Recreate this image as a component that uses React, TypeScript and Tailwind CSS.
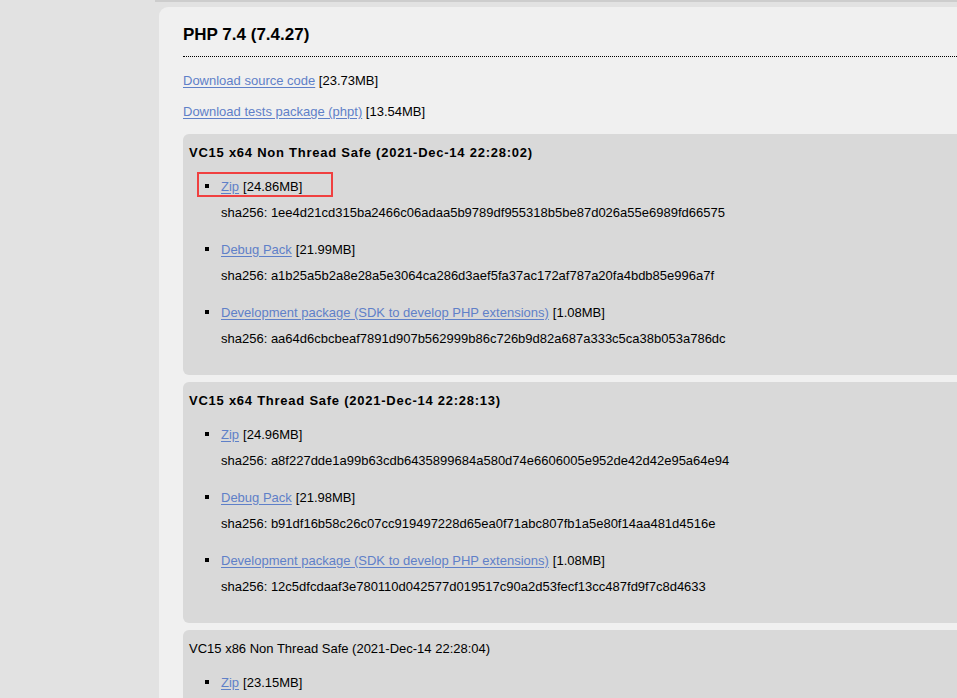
import React from 'react'

type Item = { label: string; size: string; sha: string; mark?: boolean }
type Build = { title: string; bold: boolean; items: Item[] }

const builds: Build[] = [
  {
    title: 'VC15 x64 Non Thread Safe (2021-Dec-14 22:28:02)',
    bold: true,
    items: [
      { label: 'Zip', size: '[24.86MB]', sha: '1ee4d21cd315ba2466c06adaa5b9789df955318b5be87d026a55e6989fd66575', mark: true },
      { label: 'Debug Pack', size: '[21.99MB]', sha: 'a1b25a5b2a8e28a5e3064ca286d3aef5fa37ac172af787a20fa4bdb85e996a7f' },
      { label: 'Development package (SDK to develop PHP extensions)', size: '[1.08MB]', sha: 'aa64d6cbcbeaf7891d907b562999b86c726b9d82a687a333c5ca38b053a786dc' },
    ],
  },
  {
    title: 'VC15 x64 Thread Safe (2021-Dec-14 22:28:13)',
    bold: true,
    items: [
      { label: 'Zip', size: '[24.96MB]', sha: 'a8f227dde1a99b63cdb6435899684a580d74e6606005e952de42d42e95a64e94' },
      { label: 'Debug Pack', size: '[21.98MB]', sha: 'b91df16b58c26c07cc919497228d65ea0f71abc807fb1a5e80f14aa481d4516e' },
      { label: 'Development package (SDK to develop PHP extensions)', size: '[1.08MB]', sha: '12c5dfcdaaf3e780110d042577d019517c90a2d53fecf13cc487fd9f7c8d4633' },
    ],
  },
  {
    title: 'VC15 x86 Non Thread Safe (2021-Dec-14 22:28:04)',
    bold: false,
    items: [
      { label: 'Zip', size: '[23.15MB]', sha: '' },
    ],
  },
]

function Link({ children }: { children: React.ReactNode }) {
  return <a href="#" className="text-[#5f80c8] underline underline-offset-[2px]">{children}</a>
}

function BuildBox({ build }: { build: Build }) {
  return (
    <div className="bg-[#d9d9d9] rounded-[6px] pt-[10px] pb-[29px] pl-[6px]">
      <h3 className={`h-[16px] leading-[17px] text-[13px] ${build.bold ? 'font-bold tracking-[0.75px]' : 'font-normal'}`}>{build.title}</h3>
      <ul className="mt-[18px] flex flex-col gap-[21px]">
        {build.items.map((it) => (
          <li key={it.label} className="relative">
            <div className="flex items-center h-[16px] leading-[17px]">
              <span className="ml-[16px] w-[4px] h-[4px] bg-black mr-[12px]" />
              <Link>{it.label}</Link>
              <span className="ml-[4px]">{it.size}</span>
            </div>
            {it.sha && (
              <p className="mt-[10px] h-[16px] leading-[17px] pl-[32px]">sha256: {it.sha}</p>
            )}
            {it.mark && (
              <div className="absolute left-[8px] top-[-6px] w-[136px] h-[25px] border-2 border-[#f04040]" />
            )}
          </li>
        ))}
      </ul>
    </div>
  )
}

export default function App() {
  return (
    <div className="w-[957px] h-[698px] overflow-hidden bg-[#e2e2e2] text-black text-[13px]" style={{ fontFamily: '"Liberation Sans", Arial, sans-serif' }}>
      <div className="ml-[155px] h-[2px] bg-[#cdcdcd]" />
      <div className="ml-[159px] mt-[5px] w-[1000px] bg-[#f0f0f0] rounded-tl-[9px] pl-[24px] pt-[17px]">
        <h2 className="text-[17px] font-bold leading-[22px] pb-[10px] border-b border-dotted border-black">PHP 7.4 (7.4.27)</h2>
        <div className="flex flex-col gap-[15px] mt-[15px] leading-[17px]">
          <p className="h-[16px]"><Link>Download source code</Link> [23.73MB]</p>
          <p className="h-[16px]"><Link>Download tests package (phpt)</Link> [13.54MB]</p>
          <div className="flex flex-col gap-[7px]">
            {builds.map((b) => (
              <BuildBox key={b.title} build={b} />
            ))}
          </div>
        </div>
      </div>
    </div>
  )
}
